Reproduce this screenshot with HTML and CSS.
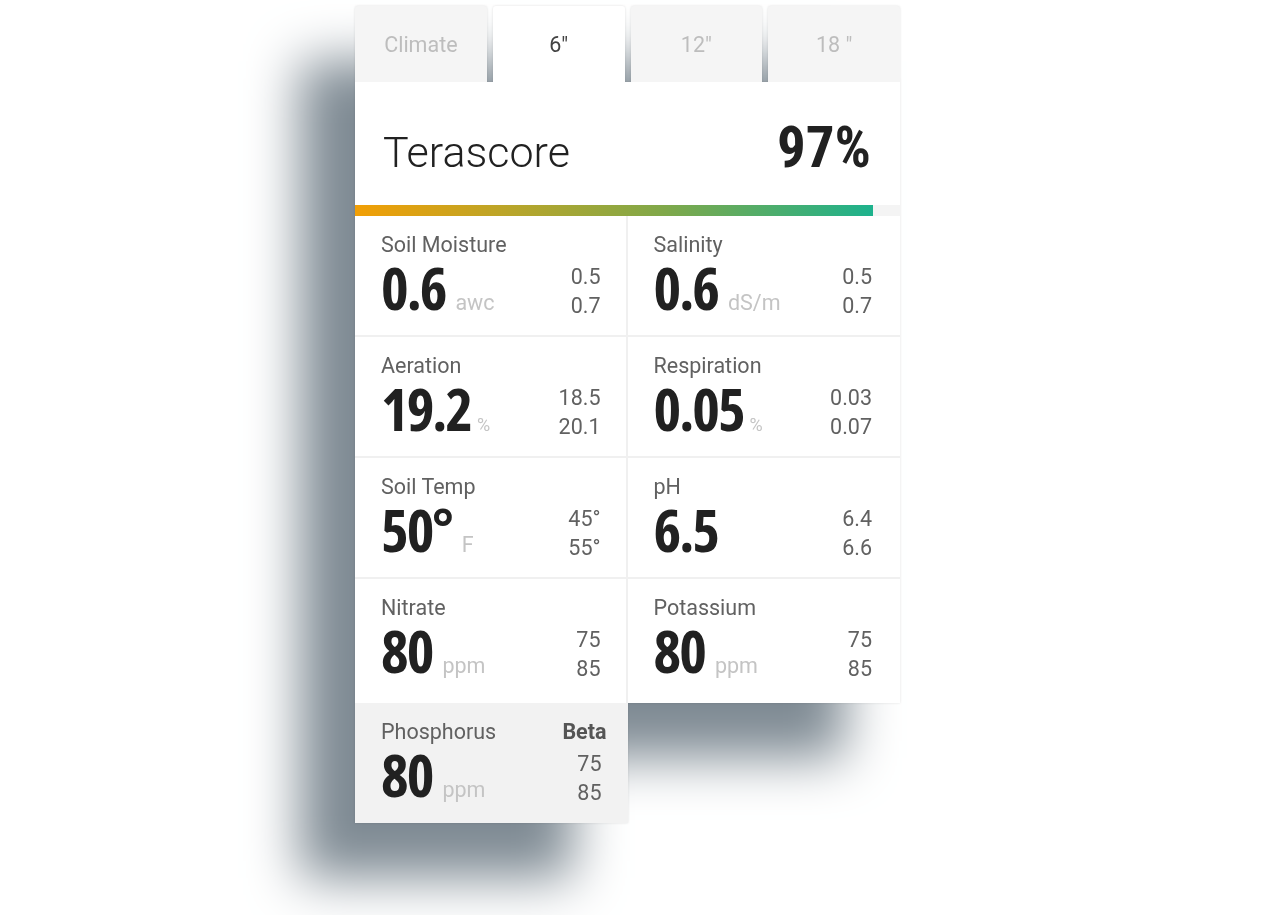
FILE: index.html
```html
<!DOCTYPE html>
<html>
<head>
<meta charset="utf-8">
<link rel="stylesheet" href="styles.css">
</head>
<body>
<div class="card">
  <div class="tabs">
    <div class="tab">Climate</div>
    <div class="tab active">6″</div>
    <div class="tab">12″</div>
    <div class="tab">18 ″</div>
  </div>
  <div class="score">
    <div class="score-title">Terascore</div>
    <div class="score-value">97%</div>
  </div>
  <div class="bar"><div class="bar-fill" style="width:95%"></div></div>
  <div class="grid">
    <div class="cell">
      <div class="head"><span>Soil Moisture</span></div>
      <div class="body">
        <div class="value"><span class="num">0.6</span><span class="unit">awc</span></div>
        <div class="range"><div>0.5</div><div>0.7</div></div>
      </div>
    </div>
    <div class="cell">
      <div class="head"><span>Salinity</span></div>
      <div class="body">
        <div class="value"><span class="num">0.6</span><span class="unit">dS/m</span></div>
        <div class="range"><div>0.5</div><div>0.7</div></div>
      </div>
    </div>
    <div class="cell">
      <div class="head"><span>Aeration</span></div>
      <div class="body">
        <div class="value"><span class="num">19.2</span><span class="unit small">%</span></div>
        <div class="range"><div>18.5</div><div>20.1</div></div>
      </div>
    </div>
    <div class="cell">
      <div class="head"><span>Respiration</span></div>
      <div class="body">
        <div class="value"><span class="num">0.05</span><span class="unit small">%</span></div>
        <div class="range"><div>0.03</div><div>0.07</div></div>
      </div>
    </div>
    <div class="cell">
      <div class="head"><span>Soil Temp</span></div>
      <div class="body">
        <div class="value"><span class="num">50°</span><span class="unit">F</span></div>
        <div class="range"><div>45°</div><div>55°</div></div>
      </div>
    </div>
    <div class="cell">
      <div class="head"><span>pH</span></div>
      <div class="body">
        <div class="value"><span class="num">6.5</span></div>
        <div class="range"><div>6.4</div><div>6.6</div></div>
      </div>
    </div>
    <div class="cell">
      <div class="head"><span>Nitrate</span></div>
      <div class="body">
        <div class="value"><span class="num">80</span><span class="unit">ppm</span></div>
        <div class="range"><div>75</div><div>85</div></div>
      </div>
    </div>
    <div class="cell">
      <div class="head"><span>Potassium</span></div>
      <div class="body">
        <div class="value"><span class="num">80</span><span class="unit">ppm</span></div>
        <div class="range"><div>75</div><div>85</div></div>
      </div>
    </div>
    <div class="cell beta">
      <div class="head"><span>Phosphorus</span><span class="beta-tag">Beta</span></div>
      <div class="body">
        <div class="value"><span class="num">80</span><span class="unit">ppm</span></div>
        <div class="range"><div>75</div><div>85</div></div>
      </div>
    </div>
  </div>
</div>
</body>
</html>
```
FILE: styles.css
```css
html, body {
  margin: 0;
  padding: 0;
  background: #ffffff;
}

body {
  font-family: Roboto, "Liberation Sans", sans-serif;
  min-height: 915px;
}

.card {
  width: 545px;
  margin: 6px 0 0 355px;
  padding-bottom: 80px;
  filter: drop-shadow(0 0 1px rgba(0, 0, 0, 0.12)) drop-shadow(-55px 55px 26px #7e8a93);
}

.tabs {
  display: flex;
  gap: 6px;
}

.tab {
  flex: 1;
  height: 76px;
  display: flex;
  align-items: center;
  justify-content: center;
  background: #f5f5f5;
  color: #bdbdbd;
  font-size: 21.5px;
  border-radius: 3px 3px 0 0;
}

.tab.active {
  background: #ffffff;
  color: #424242;
}

.score {
  background: #ffffff;
  height: 123px;
  box-sizing: border-box;
  padding: 16px 29px 0 28px;
  display: flex;
  align-items: center;
  justify-content: space-between;
}

.score-title {
  font-weight: 300;
  font-size: 43px;
  color: #212121;
}

.score-value {
  font-family: Roboto, sans-serif;
  font-stretch: 75%;
  font-weight: 700;
  font-size: 57px;
  color: #212121;
  margin-bottom: 9px;
}

.bar {
  height: 11px;
  background: #f4f4f4;
}

.bar-fill {
  height: 100%;
  background: linear-gradient(90deg, #f29f05 0%, #b9a52a 30%, #7fa84a 60%, #1db28d 100%);
}

.grid {
  display: grid;
  grid-template-columns: 1fr 1fr;
  grid-template-rows: 121px 121px 121px 124px 120px;
}

.cell {
  background: #ffffff;
  padding: 17px 28px 0 26px;
  box-sizing: border-box;
  border-bottom: 2px solid #f0f0f0;
}

.cell:nth-child(odd) {
  border-right: 2px solid #f0f0f0;
  padding-right: 25px;
}

.cell:nth-child(7),
.cell:nth-child(8) {
  border-bottom: none;
}

.cell.beta {
  background: #f2f2f2;
  border: none;
  padding-right: 21px;
}

.head {
  display: flex;
  justify-content: space-between;
  font-size: 21.5px;
  line-height: 24px;
  color: #616161;
}

.beta-tag {
  font-weight: 700;
  color: #555555;
}

.body {
  display: flex;
  justify-content: space-between;
  align-items: flex-start;
  margin-top: 5px;
}

.beta .range {
  padding-right: 5px;
}

.value {
  display: flex;
  align-items: baseline;
  margin-top: 1px;
}

.num {
  font-family: "Open Sans", sans-serif;
  font-stretch: 75%;
  font-weight: 700;
  font-size: 59px;
  line-height: 48px;
  letter-spacing: -2px;
  color: #212121;
}

.unit {
  font-size: 21.5px;
  color: #c4c4c4;
  margin-left: 10px;
}

.unit.small {
  font-size: 18px;
  margin-left: 6px;
}

.range {
  font-size: 21.5px;
  line-height: 29px;
  color: #616161;
  text-align: right;
}
```
